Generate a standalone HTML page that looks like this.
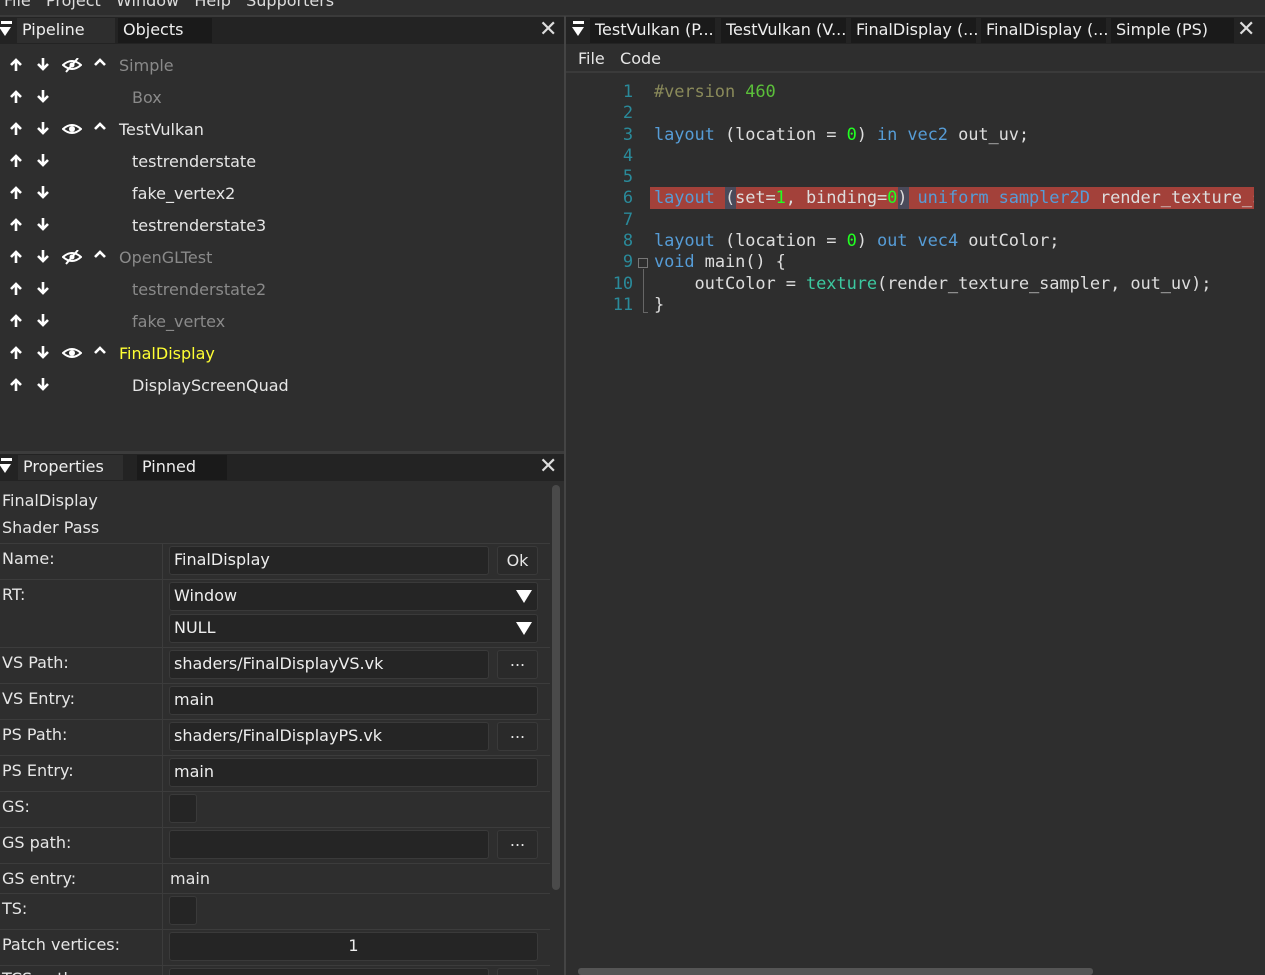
<!DOCTYPE html>
<html><head><style>
*{margin:0;padding:0;box-sizing:border-box}
html{overflow:hidden;width:1265px;height:975px}
body{width:1265px;height:975px;background:#2e2e2e;font-family:"DejaVu Sans","Liberation Sans",sans-serif;font-size:16px;color:#e6e6e6;position:relative;overflow:hidden}
.a{position:absolute;white-space:nowrap}
.tabbar{background:#232323}
.tab{position:absolute;top:1px;height:25px;background:#1a1a1a;padding:2px 5px;font-size:16px;color:#eee}
.tab.act{background:#2e2e2e}
.mono{font-family:"DejaVu Sans Mono","Liberation Mono",monospace;font-size:17px;letter-spacing:-0.1px}
.ln{color:#2a8a9a;text-align:right;width:30px}
.row{position:absolute;left:0;width:550px;border-top:1px solid #3c3c3c}
.inp{position:absolute;background:#252525;border:1px solid #3a3a3a;border-radius:3px;height:29px;padding:3px 4px;font-size:16px;color:#eee}
.btn{position:absolute;background:#2a2a2a;border:1px solid #3a3a3a;border-radius:3px;height:29px;text-align:center;font-size:16px}
.lbl{position:absolute;left:2px;font-size:16px}
.tri{position:absolute;width:0;height:0;border-left:7px solid transparent;border-right:7px solid transparent;border-top:12px solid #fff}
svg{position:absolute}
</style></head><body>
<svg width="0" height="0"><defs>
<g id="up"><path d="M7 14V3M2 8l5-5 5 5" stroke="#fff" stroke-width="2.6" fill="none"/></g>
<g id="dn"><path d="M7 1v11M2 7l5 5 5-5" stroke="#fff" stroke-width="2.6" fill="none"/></g>
<g id="eye"><path d="M1 7Q10 -1 19 7Q10 15 1 7Z" stroke="#fff" stroke-width="2" fill="none"/><circle cx="10" cy="7" r="3" fill="#fff"/></g>
<g id="eyex"><path d="M1 7Q10 -1 19 7Q10 15 1 7Z" stroke="#fff" stroke-width="2" fill="none"/><circle cx="10" cy="7" r="2.5" fill="#fff"/><path d="M4 14L16 0" stroke="#fff" stroke-width="2"/></g>
<g id="car"><path d="M2 8l5-5 5 5" stroke="#fff" stroke-width="2.6" fill="none"/></g>
</defs></svg>
<div class="a" style="top:-9px;left:4px;font-size:16px;color:#ddd">File&nbsp;&nbsp;&nbsp;Project&nbsp;&nbsp;&nbsp;Window&nbsp;&nbsp;&nbsp;Help&nbsp;&nbsp;&nbsp;Supporters</div>
<div class="a" style="top:15px;left:0;width:1265px;height:2px;background:#3a3a3a"></div>
<div class="a" style="top:16px;left:564px;width:2px;height:959px;background:#444"></div>
<div class="a tabbar" style="top:17px;left:0;width:564px;height:27px">
 <div class="a" style="left:1px;top:4px;width:11px;height:3px;background:#fff"></div>
 <div class="tri" style="left:-1px;top:10px;border-left-width:6px;border-right-width:6px;border-top-width:9px"></div>
 <div class="tab act" style="left:17px;width:98px">Pipeline</div>
 <div class="tab" style="left:118px;width:94px">Objects</div>
 <div class="a" style="left:539px;top:0;font-size:22px;color:#ddd">✕</div>
</div>
<svg style="left:9px;top:57px" width="14" height="15"><use href="#up"/></svg><svg style="left:36px;top:57px" width="14" height="15"><use href="#dn"/></svg><svg style="left:62px;top:58px" width="20" height="15"><use href="#eyex"/></svg><svg style="left:93px;top:57px" width="14" height="15"><use href="#car"/></svg><div class="a" style="left:119px;top:56px;color:#8a8a8a">Simple</div>
<svg style="left:9px;top:89px" width="14" height="15"><use href="#up"/></svg><svg style="left:36px;top:89px" width="14" height="15"><use href="#dn"/></svg><div class="a" style="left:132px;top:88px;color:#8a8a8a">Box</div>
<svg style="left:9px;top:121px" width="14" height="15"><use href="#up"/></svg><svg style="left:36px;top:121px" width="14" height="15"><use href="#dn"/></svg><svg style="left:62px;top:122px" width="20" height="15"><use href="#eye"/></svg><svg style="left:93px;top:121px" width="14" height="15"><use href="#car"/></svg><div class="a" style="left:119px;top:120px">TestVulkan</div>
<svg style="left:9px;top:153px" width="14" height="15"><use href="#up"/></svg><svg style="left:36px;top:153px" width="14" height="15"><use href="#dn"/></svg><div class="a" style="left:132px;top:152px">testrenderstate</div>
<svg style="left:9px;top:185px" width="14" height="15"><use href="#up"/></svg><svg style="left:36px;top:185px" width="14" height="15"><use href="#dn"/></svg><div class="a" style="left:132px;top:184px">fake_vertex2</div>
<svg style="left:9px;top:217px" width="14" height="15"><use href="#up"/></svg><svg style="left:36px;top:217px" width="14" height="15"><use href="#dn"/></svg><div class="a" style="left:132px;top:216px">testrenderstate3</div>
<svg style="left:9px;top:249px" width="14" height="15"><use href="#up"/></svg><svg style="left:36px;top:249px" width="14" height="15"><use href="#dn"/></svg><svg style="left:62px;top:250px" width="20" height="15"><use href="#eyex"/></svg><svg style="left:93px;top:249px" width="14" height="15"><use href="#car"/></svg><div class="a" style="left:119px;top:248px;color:#8a8a8a">OpenGLTest</div>
<svg style="left:9px;top:281px" width="14" height="15"><use href="#up"/></svg><svg style="left:36px;top:281px" width="14" height="15"><use href="#dn"/></svg><div class="a" style="left:132px;top:280px;color:#8a8a8a">testrenderstate2</div>
<svg style="left:9px;top:313px" width="14" height="15"><use href="#up"/></svg><svg style="left:36px;top:313px" width="14" height="15"><use href="#dn"/></svg><div class="a" style="left:132px;top:312px;color:#8a8a8a">fake_vertex</div>
<svg style="left:9px;top:345px" width="14" height="15"><use href="#up"/></svg><svg style="left:36px;top:345px" width="14" height="15"><use href="#dn"/></svg><svg style="left:62px;top:346px" width="20" height="15"><use href="#eye"/></svg><svg style="left:93px;top:345px" width="14" height="15"><use href="#car"/></svg><div class="a" style="left:119px;top:344px;color:#ffff33">FinalDisplay</div>
<svg style="left:9px;top:377px" width="14" height="15"><use href="#up"/></svg><svg style="left:36px;top:377px" width="14" height="15"><use href="#dn"/></svg><div class="a" style="left:132px;top:376px">DisplayScreenQuad</div>
<div class="a" style="top:451px;left:0;width:564px;height:3px;background:#3c3c3c"></div>
<div class="a tabbar" style="top:454px;left:0;width:564px;height:27px">
 <div class="a" style="left:1px;top:4px;width:11px;height:3px;background:#fff"></div>
 <div class="tri" style="left:-1px;top:10px;border-left-width:6px;border-right-width:6px;border-top-width:9px"></div>
 <div class="tab act" style="left:18px;width:105px">Properties</div>
 <div class="tab" style="left:137px;width:90px">Pinned</div>
 <div class="a" style="left:539px;top:0;font-size:22px;color:#ddd">✕</div>
</div>
<div class="a" style="left:552px;top:485px;width:8px;height:405px;background:#4a4a4a;border-radius:4px"></div>
<div class="lbl" style="top:491px">FinalDisplay</div>
<div class="lbl" style="top:518px">Shader Pass</div>
<div class="a" style="left:162px;top:543px;width:1px;height:432px;background:#3c3c3c"></div>
<div class="row" style="top:543px"></div><div class="lbl" style="top:549px">Name:</div>
<div class="inp" style="left:169px;top:546px;width:320px">FinalDisplay</div><div class="btn" style="left:497px;top:546px;width:41px;padding-top:4px">Ok</div>
<div class="row" style="top:579px"></div><div class="lbl" style="top:585px">RT:</div>
<div class="inp" style="left:169px;top:582px;width:369px">Window</div><div class="tri" style="left:516px;top:590px;border-top-width:13px;border-left-width:8px;border-right-width:8px"></div>
<div class="inp" style="left:169px;top:614px;width:369px">NULL</div><div class="tri" style="left:516px;top:622px;border-top-width:13px;border-left-width:8px;border-right-width:8px"></div>
<div class="row" style="top:647px"></div><div class="lbl" style="top:653px">VS Path:</div>
<div class="inp" style="left:169px;top:650px;width:320px">shaders/FinalDisplayVS.vk</div><div class="btn" style="left:497px;top:650px;width:41px">...</div>
<div class="row" style="top:683px"></div><div class="lbl" style="top:689px">VS Entry:</div>
<div class="inp" style="left:169px;top:686px;width:369px">main</div>
<div class="row" style="top:719px"></div><div class="lbl" style="top:725px">PS Path:</div>
<div class="inp" style="left:169px;top:722px;width:320px">shaders/FinalDisplayPS.vk</div><div class="btn" style="left:497px;top:722px;width:41px">...</div>
<div class="row" style="top:755px"></div><div class="lbl" style="top:761px">PS Entry:</div>
<div class="inp" style="left:169px;top:758px;width:369px">main</div>
<div class="row" style="top:791px"></div><div class="lbl" style="top:797px">GS:</div>
<div class="inp" style="left:169px;top:794px;width:28px"></div>
<div class="row" style="top:827px"></div><div class="lbl" style="top:833px">GS path:</div>
<div class="inp" style="left:169px;top:830px;width:320px"></div><div class="btn" style="left:497px;top:830px;width:41px">...</div>
<div class="row" style="top:863px"></div><div class="lbl" style="top:869px">GS entry:</div><div class="a" style="left:170px;top:869px">main</div>
<div class="row" style="top:893px"></div><div class="lbl" style="top:899px">TS:</div>
<div class="inp" style="left:169px;top:896px;width:28px"></div>
<div class="row" style="top:929px"></div><div class="lbl" style="top:935px">Patch vertices:</div>
<div class="inp" style="left:169px;top:932px;width:369px;text-align:center">1</div>
<div class="row" style="top:965px"></div><div class="lbl" style="top:969px">TCS path:</div>
<div class="inp" style="left:169px;top:968px;width:320px"></div><div class="btn" style="left:497px;top:968px;width:41px"></div>
<div class="a tabbar" style="top:17px;left:566px;width:699px;height:27px">
 <div class="a" style="left:7px;top:4px;width:11px;height:3px;background:#fff"></div>
 <div class="tri" style="left:6px;top:10px;border-left-width:6px;border-right-width:6px;border-top-width:9px"></div>
 <div class="tab" style="left:24px;width:125px">TestVulkan (P...</div>
 <div class="tab" style="left:155px;width:125px">TestVulkan (V...</div>
 <div class="tab" style="left:285px;width:125px">FinalDisplay (...</div>
 <div class="tab" style="left:415px;width:125px">FinalDisplay (...</div>
 <div class="tab" style="left:545px;width:123px">Simple (PS)</div>
 <div class="a" style="left:671px;top:0;font-size:22px;color:#ddd">✕</div>
</div>
<div class="a" style="top:49px;left:578px">File&nbsp;&nbsp;&nbsp;Code</div>
<div class="a" style="top:71px;left:566px;width:699px;height:2px;background:#3a3a3a"></div>
<div class="a" style="left:650px;top:187px;width:604px;height:22px;background:#a3413a"></div>
<div class="a" style="left:725px;top:187px;width:11px;height:22px;background:#4a4a5a"></div>
<div class="a" style="left:898px;top:187px;width:11px;height:22px;background:#4a4a5a"></div>
<div class="a mono" style="left:603px;top:82px;line-height:21.3px">
<div class="ln">1</div><div class="ln">2</div><div class="ln">3</div><div class="ln">4</div><div class="ln">5</div><div class="ln">6</div><div class="ln">7</div><div class="ln">8</div><div class="ln">9</div><div class="ln">10</div><div class="ln">11</div>
</div>
<div class="a" style="left:638px;top:258px;width:10px;height:10px;border:1px solid #777"></div>
<div class="a" style="left:643px;top:269px;width:1px;height:44px;background:#666"></div>
<div class="a" style="left:643px;top:312px;width:5px;height:1px;background:#666"></div>
<div class="a mono" style="left:654px;top:82px;line-height:21.3px;color:#ddd">
<div><span style="color:#8a8a5a">#version</span> <span style="color:#5bbf3a">460</span></div>
<div>&nbsp;</div>
<div><span style="color:#569cd6">layout</span> (location = <span style="color:#2f2">0</span>) <span style="color:#569cd6">in vec2</span> out_uv;</div>
<div>&nbsp;</div><div>&nbsp;</div>
<div style="overflow:hidden;width:600px"><span style="color:#569cd6">layout</span> (set=<span style="color:#2f2">1</span>, binding=<span style="color:#2f2">0</span>) <span style="color:#569cd6">uniform sampler2D</span> render_texture_sampler;</div>
<div>&nbsp;</div>
<div><span style="color:#569cd6">layout</span> (location = <span style="color:#2f2">0</span>) <span style="color:#569cd6">out vec4</span> outColor;</div>
<div><span style="color:#569cd6">void</span> main() {</div>
<div>&nbsp;&nbsp;&nbsp;&nbsp;outColor = <span style="color:#3cc9a0">texture</span>(render_texture_sampler, out_uv);</div>
<div>}</div>
</div>
<div class="a" style="left:578px;top:968px;width:515px;height:7px;background:#555;border-radius:3px"></div>
</body></html>
